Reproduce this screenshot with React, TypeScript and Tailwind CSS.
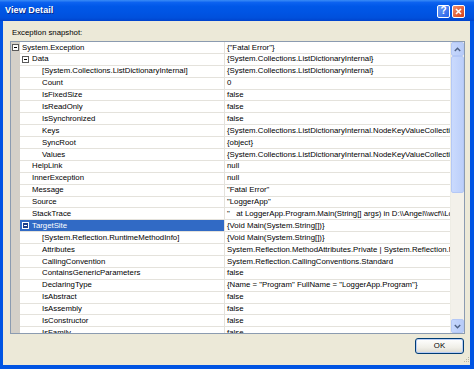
import React from "react";

type Row = { name: string; value: string; level: number; box?: boolean; selected?: boolean };

const rows: Row[] = [
  { name: "System.Exception", value: '{"Fatal Error"}', level: 0, box: true },
  { name: "Data", value: "{System.Collections.ListDictionaryInternal}", level: 1, box: true },
  { name: "[System.Collections.ListDictionaryInternal]", value: "{System.Collections.ListDictionaryInternal}", level: 2 },
  { name: "Count", value: "0", level: 2 },
  { name: "IsFixedSize", value: "false", level: 2 },
  { name: "IsReadOnly", value: "false", level: 2 },
  { name: "IsSynchronized", value: "false", level: 2 },
  { name: "Keys", value: "{System.Collections.ListDictionaryInternal.NodeKeyValueCollection}", level: 2 },
  { name: "SyncRoot", value: "{object}", level: 2 },
  { name: "Values", value: "{System.Collections.ListDictionaryInternal.NodeKeyValueCollection}", level: 2 },
  { name: "HelpLink", value: "null", level: 1 },
  { name: "InnerException", value: "null", level: 1 },
  { name: "Message", value: '"Fatal Error"', level: 1 },
  { name: "Source", value: '"LoggerApp"', level: 1 },
  { name: "StackTrace", value: '"   at LoggerApp.Program.Main(String[] args) in D:\\\\Angel\\\\wcf\\\\LoggerApp\\\\Program.cs:line 12"', level: 1 },
  { name: "TargetSite", value: "{Void Main(System.String[])}", level: 1, box: true, selected: true },
  { name: "[System.Reflection.RuntimeMethodInfo]", value: "{Void Main(System.String[])}", level: 2 },
  { name: "Attributes", value: "System.Reflection.MethodAttributes.Private | System.Reflection.MethodAttributes.Static", level: 2 },
  { name: "CallingConvention", value: "System.Reflection.CallingConventions.Standard", level: 2 },
  { name: "ContainsGenericParameters", value: "false", level: 2 },
  { name: "DeclaringType", value: '{Name = "Program" FullName = "LoggerApp.Program"}', level: 2 },
  { name: "IsAbstract", value: "false", level: 2 },
  { name: "IsAssembly", value: "false", level: 2 },
  { name: "IsConstructor", value: "false", level: 2 },
  { name: "IsFamily", value: "false", level: 2 },
];

function Box({ inverted }: { inverted?: boolean }) {
  return (
    <div
      className={
        "relative w-[7px] h-[7px] shrink-0 border " +
        (inverted ? "border-white bg-[#1c3f8c]" : "border-[#5a5a5a] bg-white")
      }
    >
      <div className={"absolute left-[1px] top-[2px] w-[3px] h-px " + (inverted ? "bg-white" : "bg-black")} />
    </div>
  );
}

function GridRow({ r }: { r: Row }) {
  const pl = r.level === 0 ? 2 : 2 + (r.level - 1) * 10;
  return (
    <div className="flex h-[11.9px] shrink-0">
      <div className="w-[9px] shrink-0 bg-[#d4d0c8] flex items-center pl-[1px]">
        {r.level === 0 && r.box ? <Box /> : null}
      </div>
      <div
        className={
          "w-[205px] shrink-0 flex items-center border-b border-r border-[#e4e2dc] overflow-hidden whitespace-nowrap " +
          (r.selected ? "bg-[#316ac5] text-white" : "bg-white")
        }
        style={{ paddingLeft: pl }}
      >
        {r.level >= 1 ? (
          r.box ? (
            <div className="w-[10px] shrink-0">
              <Box inverted={r.selected} />
            </div>
          ) : (
            <div className="w-[10px] shrink-0" />
          )
        ) : null}
        <span className="leading-none">{r.name}</span>
      </div>
      <div className="flex-1 min-w-0 flex items-center pl-[2px] bg-white border-b border-[#e4e2dc] overflow-hidden whitespace-pre">
        <span className="leading-none">{r.value}</span>
      </div>
    </div>
  );
}

function Scrollbar() {
  return (
    <div className="w-[14px] shrink-0 flex flex-col bg-[#f3f1ea] border-l border-[#eeede5]">
      <div className="h-[14px] shrink-0 rounded-[2px] border border-[#b4c8f6] bg-[linear-gradient(90deg,#c6d7fc,#b7cbf8)] flex items-center justify-center">
        <svg width="7" height="5" viewBox="0 0 7 5">
          <path d="M0.8 4 L3.5 1.3 L6.2 4" fill="none" stroke="#4d6185" strokeWidth="1.4" />
        </svg>
      </div>
      <div className="h-[137px] shrink-0 rounded-[2px] border border-[#b4c8f6] bg-[linear-gradient(90deg,#cadafd,#bccffa)] flex items-center justify-center" />
      <div className="flex-1" />
      <div className="h-[14px] shrink-0 rounded-[2px] border border-[#b4c8f6] bg-[linear-gradient(90deg,#c6d7fc,#b7cbf8)] flex items-center justify-center">
        <svg width="7" height="5" viewBox="0 0 7 5">
          <path d="M0.8 1 L3.5 3.7 L6.2 1" fill="none" stroke="#4d6185" strokeWidth="1.4" />
        </svg>
      </div>
    </div>
  );
}

export default function App() {
  return (
    <div className="w-[474px] h-[369px] flex flex-col bg-[#0054e3] font-['Liberation_Sans',Arial,sans-serif] text-[7.8px] text-black overflow-hidden">
      {/* Title bar */}
      <div className="h-[21px] shrink-0 flex items-center pl-[5px] pr-[9px] bg-[linear-gradient(180deg,#3a8cf6_0%,#0c62f0_12%,#0058e8_30%,#0054e3_60%,#0050dc_85%,#0042cc_100%)]">
        <div className="flex-1 text-white font-bold text-[9px] tracking-[0.1px] [text-shadow:1px_1px_0_#0a2c8a]">View Detail</div>
        <div className="flex gap-[2px] mt-[1px]">
          <div className="w-[13px] h-[13px] rounded-[2px] border border-white bg-[linear-gradient(135deg,#6a9cf7,#2863e8)] flex items-center justify-center text-white font-bold text-[10px] leading-none">
            ?
          </div>
          <div className="w-[13px] h-[13px] rounded-[2px] border border-white bg-[linear-gradient(135deg,#f0906c,#d6401a)] flex items-center justify-center">
            <svg width="7" height="7" viewBox="0 0 7 7">
              <path d="M1 1 L6 6 M6 1 L1 6" stroke="white" strokeWidth="1.6" />
            </svg>
          </div>
        </div>
      </div>
      {/* Body */}
      <div className="flex-1 flex ml-[3px] mr-[4px] mb-[4px] bg-[#ece9d8] flex-col">
        <div className="h-[20px] shrink-0 flex items-center pl-[9px] pt-[3px]">Exception snapshot:</div>
        <div className="ml-[7px] mr-[5px] h-[293px] shrink-0 flex border border-[#8b9bb0] bg-white">
          <div className="flex-1 min-w-0 flex flex-col overflow-hidden">
            {rows.map((r, i) => (
              <GridRow key={i} r={r} />
            ))}
          </div>
          <Scrollbar />
        </div>
        <div className="flex-1 flex justify-end items-start pt-[4px] pr-[6px] relative">
          <div className="w-[49px] h-[16px] rounded-[3px] border border-[#003c74] bg-[linear-gradient(180deg,#ffffff,#f0efe8_60%,#dcdad0)] flex items-center justify-center shadow-[inset_0_0_0_1px_#b8cdf5]">
            OK
          </div>
          <div className="absolute right-[1px] bottom-[1px] w-[7px] h-[7px] flex flex-col gap-[1px] items-end">
            <div className="flex gap-[1px]"><div className="w-[1px] h-[1px] bg-[#b8b4a2]" /></div>
            <div className="flex gap-[1px]"><div className="w-[1px] h-[1px] bg-[#b8b4a2]" /><div className="w-[1px] h-[1px] bg-[#b8b4a2]" /></div>
            <div className="flex gap-[1px]"><div className="w-[1px] h-[1px] bg-[#b8b4a2]" /><div className="w-[1px] h-[1px] bg-[#b8b4a2]" /><div className="w-[1px] h-[1px] bg-[#b8b4a2]" /></div>
          </div>
        </div>
      </div>
    </div>
  );
}
